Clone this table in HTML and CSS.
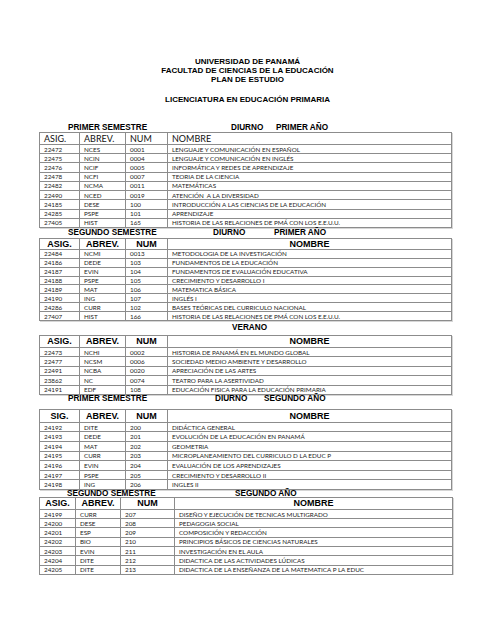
FILE: index.html
```html
<!DOCTYPE html>
<html lang="es">
<head>
<meta charset="utf-8">
<title>Plan de Estudio</title>
<link rel="stylesheet" href="styles.css">
</head>
<body>
<div class="page">
  <div class="titles">
    <p>UNIVERSIDAD DE PANAMÁ</p>
    <p>FACULTAD DE CIENCIAS DE LA EDUCACIÓN</p>
    <p>PLAN DE ESTUDIO</p>
    <p class="career">LICENCIATURA EN EDUCACIÓN PRIMARIA</p>
  </div>

  <div class="sec s1"><span class="a">PRIMER SEMESTRE</span><span class="b">DIURNO</span><span>PRIMER AÑO</span></div>
  <div class="tbl t1">
    <div class="c hr">ASIG.</div><div class="c hr">ABREV.</div><div class="c hr">NUM</div><div class="c hr">NOMBRE</div>
    <div class="c">22472</div><div class="c">NCES</div><div class="c">0001</div><div class="c">LENGUAJE Y COMUNICACIÓN EN ESPAÑOL</div>
    <div class="c">22475</div><div class="c">NCIN</div><div class="c">0004</div><div class="c">LENGUAJE Y COMUNICACIÓN EN INGLÉS</div>
    <div class="c">22476</div><div class="c">NCIF</div><div class="c">0005</div><div class="c">INFORMÁTICA Y REDES DE APRENDIZAJE</div>
    <div class="c">22478</div><div class="c">NCFI</div><div class="c">0007</div><div class="c">TEORIA DE LA CIENCIA</div>
    <div class="c">22482</div><div class="c">NCMA</div><div class="c">0011</div><div class="c">MATEMÁTICAS</div>
    <div class="c">22490</div><div class="c">NCED</div><div class="c">0019</div><div class="c">ATENCIÓN&nbsp; A LA DIVERSIDAD</div>
    <div class="c">24185</div><div class="c">DESE</div><div class="c">100</div><div class="c">INTRODUCCIÓN A LAS CIENCIAS DE LA EDUCACIÓN</div>
    <div class="c">24285</div><div class="c">PSPE</div><div class="c">101</div><div class="c">APRENDIZAJE</div>
    <div class="c">27405</div><div class="c">HIST</div><div class="c">165</div><div class="c">HISTORIA DE LAS RELACIONES DE PMÁ CON LOS E.E.U.U.</div>
  </div>

  <div class="sec s2"><span class="a">SEGUNDO SEMESTRE</span><span class="b">DIURNO</span><span>PRIMER AÑO</span></div>
  <div class="tbl t2">
    <div class="c hb">ASIG.</div><div class="c hb">ABREV.</div><div class="c hb">NUM</div><div class="c hb">NOMBRE</div>
    <div class="c">22484</div><div class="c">NCMI</div><div class="c">0013</div><div class="c">METODOLOGIA DE LA INVESTIGACIÓN</div>
    <div class="c">24186</div><div class="c">DEDE</div><div class="c">103</div><div class="c">FUNDAMENTOS DE LA EDUCACIÓN</div>
    <div class="c">24187</div><div class="c">EVIN</div><div class="c">104</div><div class="c">FUNDAMENTOS DE EVALUACIÓN EDUCATIVA</div>
    <div class="c">24188</div><div class="c">PSPE</div><div class="c">105</div><div class="c">CRECIMIENTO Y DESARROLLO I</div>
    <div class="c">24189</div><div class="c">MAT</div><div class="c">106</div><div class="c">MATEMATICA BÁSICA</div>
    <div class="c">24190</div><div class="c">ING</div><div class="c">107</div><div class="c">INGLÉS I</div>
    <div class="c">24286</div><div class="c">CURR</div><div class="c">102</div><div class="c">BASES TEÓRICAS DEL CURRICULO NACIONAL</div>
    <div class="c">27407</div><div class="c">HIST</div><div class="c">166</div><div class="c">HISTORIA DE LAS RELACIONES DE PMÁ CON LOS E.E.U.U.</div>
  </div>

  <div class="sec s3"><span>VERANO</span></div>
  <div class="tbl t3">
    <div class="c hb">ASIG.</div><div class="c hb">ABREV.</div><div class="c hb">NUM</div><div class="c hb">NOMBRE</div>
    <div class="c">22473</div><div class="c">NCHI</div><div class="c">0002</div><div class="c">HISTORIA DE PANAMÁ EN EL MUNDO GLOBAL</div>
    <div class="c">22477</div><div class="c">NCSM</div><div class="c">0006</div><div class="c">SOCIEDAD MEDIO AMBIENTE Y DESARROLLO</div>
    <div class="c">22491</div><div class="c">NCBA</div><div class="c">0020</div><div class="c">APRECIACIÓN DE LAS ARTES</div>
    <div class="c">23862</div><div class="c">NC</div><div class="c">0074</div><div class="c">TEATRO PARA LA ASERTIVIDAD</div>
    <div class="c">24191</div><div class="c">EDF</div><div class="c">108</div><div class="c">EDUCACIÓN FISICA PARA LA EDUCACIÓN PRIMARIA</div>
  </div>

  <div class="sec s4"><span class="a">PRIMER SEMESTRE</span><span class="b">DIURNO</span><span>SEGUNDO AÑO</span></div>
  <div class="tbl t4">
    <div class="c hb">SIG.</div><div class="c hb">ABREV.</div><div class="c hb">NUM</div><div class="c hb">NOMBRE</div>
    <div class="c">24192</div><div class="c">DITE</div><div class="c">200</div><div class="c">DIDÁCTICA GENERAL</div>
    <div class="c">24193</div><div class="c">DEDE</div><div class="c">201</div><div class="c">EVOLUCIÓN DE LA EDUCACIÓN EN PANAMÁ</div>
    <div class="c">24194</div><div class="c">MAT</div><div class="c">202</div><div class="c">GEOMETRIA</div>
    <div class="c">24195</div><div class="c">CURR</div><div class="c">203</div><div class="c">MICROPLANEAMIENTO DEL CURRICULO D LA EDUC P</div>
    <div class="c">24196</div><div class="c">EVIN</div><div class="c">204</div><div class="c">EVALUACIÓN DE LOS APRENDIZAJES</div>
    <div class="c">24197</div><div class="c">PSPE</div><div class="c">205</div><div class="c">CRECIMIENTO Y DESARROLLO II</div>
    <div class="c">24198</div><div class="c">ING</div><div class="c">206</div><div class="c">INGLES II</div>
  </div>

  <div class="sec s5"><span class="a">SEGUNDO SEMESTRE</span><span>SEGUNDO AÑO</span></div>
  <div class="tbl t5">
    <div class="c hb">ASIG.</div><div class="c hb">ABREV.</div><div class="c hb">NUM</div><div class="c hb">NOMBRE</div>
    <div class="c">24199</div><div class="c">CURR</div><div class="c">207</div><div class="c">DISEÑO Y EJECUCIÓN DE TECNICAS MULTIGRADO</div>
    <div class="c">24200</div><div class="c">DESE</div><div class="c">208</div><div class="c">PEDAGOGIA SOCIAL</div>
    <div class="c">24201</div><div class="c">ESP</div><div class="c">209</div><div class="c">COMPOSICIÓN Y REDACCIÓN</div>
    <div class="c">24202</div><div class="c">BIO</div><div class="c">210</div><div class="c">PRINCIPIOS BÁSICOS DE CIENCIAS NATURALES</div>
    <div class="c">24203</div><div class="c">EVIN</div><div class="c">211</div><div class="c">INVESTIGACIÓN EN EL AULA</div>
    <div class="c">24204</div><div class="c">DITE</div><div class="c">212</div><div class="c">DIDACTICA DE LAS ACTIVIDADES LÚDICAS</div>
    <div class="c">24205</div><div class="c">DITE</div><div class="c">213</div><div class="c">DIDACTICA DE LA ENSEÑANZA DE LA MATEMATICA P LA EDUC</div>
  </div>
</div>
</body>
</html>
```

FILE: styles.css
```css
html, body {
  margin: 0;
  background: #ffffff;
}

.page {
  width: 495px;
  padding-top: 57px;
  font-family: "Liberation Sans", Arial, sans-serif;
  color: #000000;
}

.titles p {
  margin: 0;
  text-align: center;
  font-weight: bold;
  font-size: 8px;
  line-height: 9px;
}

.titles .career {
  margin-top: 11px;
}

.sec {
  display: flex;
  font-weight: bold;
  font-size: 8.2px;
  white-space: nowrap;
}

.s1 { margin-top: 20px; height: 8px; line-height: 8px; padding-left: 68px; }
.s1 .a { width: 163px; }
.s1 .b { width: 45px; }

.s2 { height: 10px; line-height: 10px; padding-left: 68px; }
.s2 .a { width: 145px; }
.s2 .b { width: 61px; }

.s3 { height: 14px; line-height: 14px; padding-left: 232px; }

.s4 { height: 14px; line-height: 8px; padding-left: 68px; }
.s4 .a { width: 147px; }
.s4 .b { width: 49px; }

.s5 { height: 7px; line-height: 7px; padding-left: 67px; }
.s5 .a { width: 168px; }

.tbl {
  display: grid;
  box-sizing: border-box;
  width: 413px;
  margin-left: 39px;
  border-top: 1px solid #8c8c8c;
  border-left: 1px solid #8c8c8c;
  grid-template-columns: 40px 46px 42px 284px;
  box-shadow: 1px 1px 0 #d6d6d6;
}

.t1 { grid-template-rows: 12px; grid-auto-rows: 9.22px; }
.t2 { grid-template-rows: 11px; grid-auto-rows: 8.875px; }
.t3 { grid-template-rows: 12px; grid-auto-rows: 9.4px; }
.t4 { grid-template-rows: 13px; grid-auto-rows: 9.57px; }
.t5 {
  width: 414px;
  grid-template-columns: 36px 45px 54px 278px;
  grid-template-rows: 12px;
  grid-auto-rows: 9.29px;
}

.c {
  box-sizing: border-box;
  display: flex;
  align-items: center;
  padding-left: 4px;
  border-right: 1px solid #8c8c8c;
  border-bottom: 1px solid #8c8c8c;
  overflow: hidden;
  white-space: nowrap;
  font-family: Lato, "Open Sans", sans-serif;
  font-size: 6.3px;
  color: #1c1c1c;
}

.hr {
  font-size: 9px;
  color: #111111;
}

.hb {
  justify-content: center;
  padding-left: 0;
  font-family: "Liberation Sans", Arial, sans-serif;
  font-weight: bold;
  font-size: 9px;
  color: #000000;
}
```
